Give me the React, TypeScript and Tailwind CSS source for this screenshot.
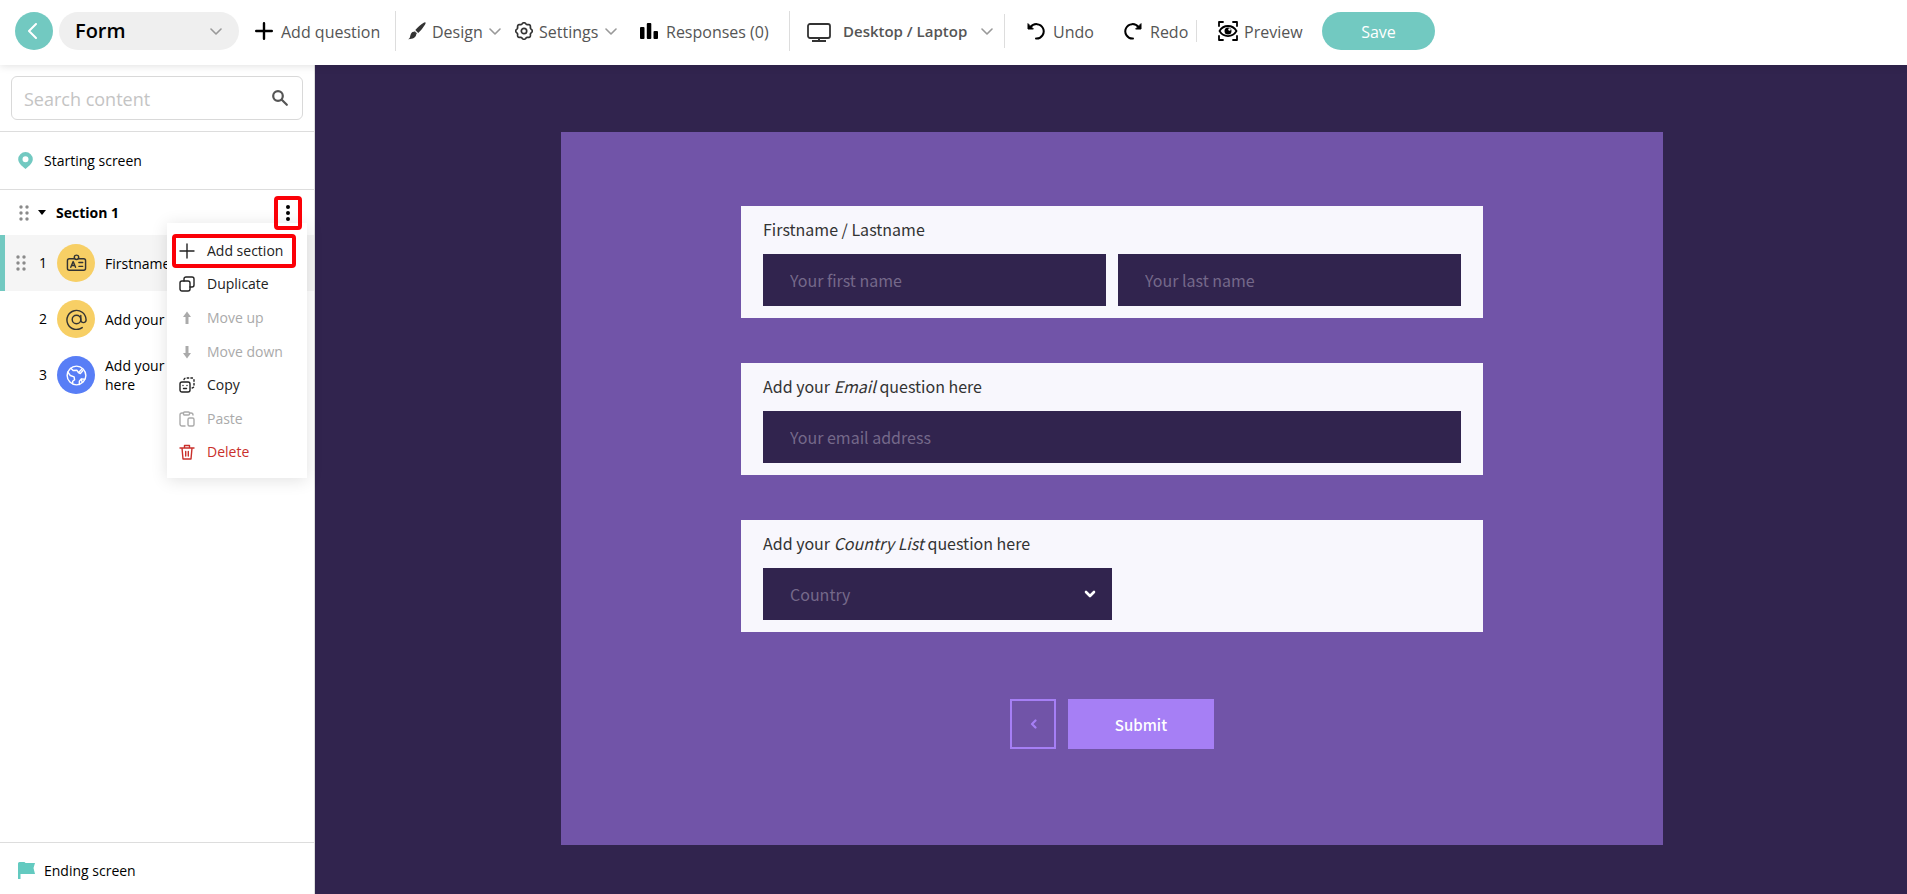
import type { ReactNode } from "react";
import clsx from "clsx";

type IconProps = { children: ReactNode; size?: string; box?: string; width?: number };

function Icon({ children, size = "h-5 w-5", box = "0 0 24 24", width = 2 }: IconProps) {
  return (
    <svg
      viewBox={box}
      fill="none"
      stroke="currentColor"
      strokeWidth={width}
      strokeLinecap="round"
      strokeLinejoin="round"
      className={clsx("shrink-0", size)}
      aria-hidden
    >
      {children}
    </svg>
  );
}

function Chevron() {
  return (
    <Icon size="h-[7px] w-3 text-[#999]" box="0 0 12 7" width={1.6}>
      <path d="M1 1l5 5 5-5" />
    </Icon>
  );
}

function Grip() {
  return (
    <svg viewBox="0 0 10 16" className="h-4 w-[10px] shrink-0 fill-[#8a8a8a]" aria-hidden>
      {[2, 8, 14].map((y) => (
        <g key={y}>
          <circle cx="2" cy={y} r="1.7" />
          <circle cx="8" cy={y} r="1.7" />
        </g>
      ))}
    </svg>
  );
}

const GEAR_PATH = Array.from({ length: 96 }, (_, i) => {
  const a = (i / 96) * Math.PI * 2;
  const r = 7.7 + 0.65 * Math.cos(a * 8);
  return `${i ? "L" : "M"}${(9 + r * Math.sin(a)).toFixed(2)} ${(9 - r * Math.cos(a)).toFixed(2)}`;
}).join("");

function Toolbar() {
  return (
    <header className="relative z-10 flex h-[65px] items-start bg-white px-[15px] pt-[11px] text-base text-[#555] shadow-[0_1px_8px_rgba(0,0,0,0.12)]">
      <div className="flex h-10 items-center whitespace-nowrap">
        <button
          type="button"
          aria-label="Back"
          className="flex h-[38px] w-[38px] items-center justify-center rounded-full bg-[#72c9c1] pr-1 text-white"
        >
          <Icon size="h-4 w-[9px]" box="0 0 9 16">
            <path d="M8 1L1 8l7 7" />
          </Icon>
        </button>
        <button
          type="button"
          className="ml-[6px] flex h-[38px] w-[180px] items-center justify-between rounded-full bg-[#efefef] pl-4 pr-[17px] text-xl font-semibold text-black"
        >
          Form
          <Chevron />
        </button>
        <button type="button" className="ml-4 flex w-[140px] items-center gap-2">
          <Icon size="h-[18px] w-[18px] text-black" box="0 0 18 18" width={2.4}>
            <path d="M9 1.2v15.6M1.2 9h15.6" />
          </Icon>
          <span className="pt-0.5">Add question</span>
        </button>
        <button
          type="button"
          className="flex h-10 w-[120px] items-center border-l border-[#ddd] pl-3"
        >
          <svg viewBox="0 0 18 18" className="h-[18px] w-[18px] fill-[#333]" aria-hidden>
            <path d="M17.4.5c.5.4.2 1.100-.3 1.900-1.900 3.100-4.600 6.400-6.900 8.600L7.300 8.100C9.700 5.400 12.700 2.600 15.700.8c.8-.5 1.300-.7 1.700-.3z" />
            <path d="M6.500 8.900l2.700 2.700-.4.400-2.700-2.700zM5.500 9.800c1.600.1 2.800 1.300 2.800 2.800-.5 2.800-3.700 4.800-8.100 4.700 1.900-.9 1.800-2.500 2.300-4.200.5-1.800 1.500-3.100 3-3.300z" />
          </svg>
          <span className="ml-[6px] w-[57px] pt-0.5 text-left">Design</span>
          <Chevron />
        </button>
        <button type="button" className="flex w-[125px] items-center">
          <Icon size="h-[18px] w-[18px] text-[#333]" box="0 0 18 18" width={1.7}>
            <path d={GEAR_PATH} />
            <circle cx="9" cy="9" r="2.7" />
          </Icon>
          <span className="ml-[6px] w-[66px] pt-0.5 text-left">Settings</span>
          <Chevron />
        </button>
        <button type="button" className="flex w-[149px] items-center gap-2">
          <svg viewBox="0 0 18 18" className="h-[18px] w-[18px] fill-black" aria-hidden>
            <rect y="5" width="4.500" height="12" rx="1" />
            <rect x="6.800" y="1" width="4.500" height="16" rx="1" />
            <rect x="13.500" y="9" width="4.500" height="8" rx="1" />
          </svg>
          <span className="pt-0.5">Responses (0)</span>
        </button>
        <button
          type="button"
          className="flex h-10 w-[215px] items-center border-l border-[#ddd] pl-[17px] text-[15px] font-semibold"
        >
          <svg viewBox="0 0 24 20" className="mt-1 h-5 w-6" aria-hidden>
            <rect x="1" y="1" width="22" height="14" rx="2" fill="none" stroke="#333" strokeWidth="1.800" />
            <path d="M11 15h2v2.500h-2zM5 17h14v2H5z" fill="#333" />
          </svg>
          <span className="ml-3 w-[138px] text-left">Desktop / Laptop</span>
          <Chevron />
        </button>
        <button
          type="button"
          className="flex h-[34px] w-[120px] items-center gap-2 border-l border-[#ddd] pl-[22px]"
        >
          <Icon size="h-[18px] w-[18px] text-black" box="0 0 18 18">
            <path d="M3.500 5.300A7.200 7.200 0 1 1 9 16.500" />
            <path d="M1 2v5h5z" fill="currentColor" strokeWidth="1" />
          </Icon>
          <span className="pt-0.5">Undo</span>
        </button>
        <button
          type="button"
          className="flex h-[22px] w-[73px] items-center gap-2 border-r border-[#ddd]"
        >
          <Icon size="h-[18px] w-[18px] text-black" box="0 0 18 18">
            <path d="M14.500 5.300A7.200 7.200 0 1 0 9 16.500" />
            <path d="M17 2v5h-5z" fill="currentColor" strokeWidth="1" />
          </Icon>
          <span className="pt-0.5">Redo</span>
        </button>
        <button type="button" className="ml-[21px] flex w-[104px] items-center gap-[6px]">
          <Icon size="h-5 w-5 text-black" box="0 0 20 20" width={1.8}>
            <path d="M1 5V1h4M15 1h4v4M19 15v4h-4M5 19H1v-4" />
            <path d="M1.500 10C5.500 3.300 14.500 3.300 18.500 10 14.500 16.700 5.500 16.700 1.500 10z" />
            <circle cx="10" cy="10" r="2.600" fill="currentColor" />
            <circle cx="11.500" cy="8.500" r="1.200" fill="white" stroke="none" />
          </Icon>
          <span className="pt-0.5">Preview</span>
        </button>
        <button
          type="button"
          className="h-[38px] w-[113px] rounded-full bg-[#72c9c1] pt-0.5 text-white"
        >
          Save
        </button>
      </div>
    </header>
  );
}

const MENU_ITEMS: { label: string; tone: string; icon: ReactNode }[] = [
  {
    label: "Add section",
    tone: "text-[#222]",
    icon: <path d="M8 1v14M1 8h14" />,
  },
  {
    label: "Duplicate",
    tone: "text-[#222]",
    icon: (
      <>
        <rect x="1" y="5" width="10" height="10" rx="2" />
        <path d="M5 5V3a2 2 0 0 1 2-2h6a2 2 0 0 1 2 2v6a2 2 0 0 1-2 2h-2" />
      </>
    ),
  },
  {
    label: "Move up",
    tone: "text-[#aaa]",
    icon: (
      <>
        <path d="M8 14V6" strokeWidth="3" strokeLinecap="butt" />
        <path d="M8 1.500l4 5.500H4z" fill="currentColor" stroke="none" />
      </>
    ),
  },
  {
    label: "Move down",
    tone: "text-[#aaa]",
    icon: (
      <>
        <path d="M8 2v8" strokeWidth="3" strokeLinecap="butt" />
        <path d="M8 14.500L12 9H4z" fill="currentColor" stroke="none" />
      </>
    ),
  },
  {
    label: "Copy",
    tone: "text-[#222]",
    icon: (
      <>
        <rect x="1" y="5" width="10" height="10" rx="2" />
        <path d="M5 2.500A2 2 0 0 1 7 1h6a2 2 0 0 1 2 2v6a2 2 0 0 1-2 2" strokeDasharray="1.500 2.200" />
        <path d="M4 8.500v.1M4.500 11.500h3M8 8.500v.1" />
      </>
    ),
  },
  {
    label: "Paste",
    tone: "text-[#aaa]",
    icon: (
      <>
        <path d="M6 15H3a2 2 0 0 1-2-2V4a2 2 0 0 1 2-2h1M11 2h1a2 2 0 0 1 2 2" />
        <rect x="4.500" y="1" width="6" height="3" rx="1" />
        <rect x="9" y="7" width="6" height="8" rx="1.500" />
      </>
    ),
  },
  {
    label: "Delete",
    tone: "text-[#c9302c]",
    icon: (
      <>
        <path d="M1 4h14M5.500 4V1.500h5V4M3 4l1 11h8l1-11" />
        <path d="M6.700 7.500v4.500M9.300 7.500v4.500" />
      </>
    ),
  },
];

function SectionMenu() {
  return (
    <div
      role="menu"
      className="absolute right-[7px] top-[33px] z-10 flex h-[255px] w-[140px] flex-col bg-white pb-[9px] pt-[11px] shadow-[0_2px_16px_rgba(0,0,0,0.12)]"
    >
      {MENU_ITEMS.map((item, i) => (
        <button
          key={item.label}
          type="button"
          role="menuitem"
          className={clsx("relative flex flex-1 items-center gap-3 pl-3 text-sm", item.tone)}
        >
          <Icon size="h-4 w-4" box="0 0 16 16" width={1.4}>
            {item.icon}
          </Icon>
          {item.label}
          {i === 0 && (
            <span className="absolute inset-y-0 left-[5px] right-[11px] rounded-sm border-[4px] border-[#fb0007]" />
          )}
        </button>
      ))}
    </div>
  );
}

const QUESTIONS = [
  {
    text: "Firstname",
    badge: "bg-[#f7cf65] text-[#333]",
    icon: (
      <>
        <path d="M8.500 6H3.500A2 2 0 0 0 1.500 8v8a2 2 0 0 0 2 2h15a2 2 0 0 0 2-2V8a2 2 0 0 0-2-2h-5" />
        <circle cx="11" cy="4.500" r="2.300" />
        <path d="M5 15l2.500-6 2.500 6M6 13h3M13.500 10h4M13.500 14h4" />
      </>
    ),
  },
  {
    text: "Add your",
    badge: "bg-[#f7cf65] text-[#333]",
    icon: (
      <>
        <circle cx="11" cy="11" r="4.500" />
        <path d="M15.500 6.800V12a2.800 2.800 0 0 0 5.500 0v-1a10 10 0 1 0-4 8.500" />
      </>
    ),
  },
  {
    text: "Add your here",
    badge: "bg-[#587ef6] text-white",
    icon: (
      <>
        <circle cx="11" cy="11" r="9.800" />
        <path d="M5 3.500l2.500 2.300 4-.3 1.500 2.500 3.500-3.500M13 8l2 1 2.500-3M2 7.500l2.500 3.500 4 1.500.5 3-2 1.500v2.500M14 20.500v-3.500l2-2.500 3.500.5M16 15l1 3" />
      </>
    ),
  },
];

function Sidebar() {
  return (
    <aside className="flex w-[315px] shrink-0 flex-col border-r border-[#ddd] bg-white text-sm text-black">
      <div className="border-b border-[#ddd] px-[11px] pb-[11px] pt-[11px]">
        <div className="flex h-11 items-center rounded-md border border-[#d9d9d9] pl-3 pr-[14px]">
          <input
            type="search"
            aria-label="Search content"
            placeholder="Search content"
            className="min-w-0 flex-1 pt-0.5 text-lg outline-none placeholder:text-[#c4c4c4]"
          />
          <Icon size="h-4 w-4 text-[#555]" box="0 0 16 16" width={2.2}>
            <circle cx="6" cy="6" r="4.800" />
            <path d="M10 10l4.800 4.800" />
          </Icon>
        </div>
      </div>

      <a href="#start" className="flex h-[58px] items-center gap-[11px] border-b border-[#ddd] pl-[18px]">
        <svg viewBox="0 0 15 17" className="h-[17px] w-[15px]" aria-hidden>
          <path
            d="M7.500 0A7.300 7.300 0 0 0 .2 7.300c0 3.500 3.300 6.500 7.300 9.700 4-3.200 7.300-6.200 7.300-9.700A7.300 7.300 0 0 0 7.500 0zm0 4.200a3 3 0 1 1 0 6 3 3 0 0 1 0-6z"
            fill="#72c9c1"
          />
        </svg>
        Starting screen
      </a>

      <div className="relative flex h-[45px] items-center pl-[19px]">
        <Grip />
        <svg viewBox="0 0 8 5" className="ml-[9px] h-[5px] w-2" aria-hidden>
          <path d="M0 0h8L4 5z" />
        </svg>
        <h2 className="ml-[10px] font-bold">Section 1</h2>
        <button
          type="button"
          aria-label="Section options"
          className="absolute right-3 top-[6px] z-20 flex h-[34px] w-7 items-center justify-center rounded-sm border-[4px] border-[#fb0007]"
        >
          <svg viewBox="0 0 4 16" className="h-4 w-1" aria-hidden>
            <circle cx="2" cy="2" r="2" />
            <circle cx="2" cy="8" r="2" />
            <circle cx="2" cy="14" r="2" />
          </svg>
        </button>
        <SectionMenu />
      </div>

      <ol>
        {QUESTIONS.map((q, i) => (
          <li
            key={i}
            className={clsx(
              "flex h-14 items-center border-l-[5px] pl-[11px]",
              i === 0 ? "border-[#72c9c1] bg-[#f5f5f5]" : "border-transparent",
            )}
          >
            <span className="flex w-[10px]">{i === 0 && <Grip />}</span>
            <span className="ml-[13px] w-[18px]">{i + 1}</span>
            <span
              className={clsx(
                "flex h-[38px] w-[38px] shrink-0 items-center justify-center rounded-full",
                q.badge,
              )}
            >
              <Icon size="h-[21px] w-[21px]" box="0 0 22 22" width={1.5}>
                {q.icon}
              </Icon>
            </span>
            <span className="ml-[10px] w-16 leading-[19px]">{q.text}</span>
          </li>
        ))}
      </ol>

      <a
        href="#end"
        className="mt-auto flex h-[52px] items-center gap-[9px] border-t border-[#ddd] pl-[18px] pt-1"
      >
        <svg viewBox="0 0 17 17" className="h-[17px] w-[17px]" aria-hidden>
          <path d="M0 1.500Q0 0 1.500 0H6q1 0 1.500 1H17l-1.500 5L17 12H9q-1 0-1.500 0H2.500v5H0z" fill="#63cac0" />
        </svg>
        Ending screen
      </a>
    </aside>
  );
}

const FIELD =
  "h-[52px] w-full min-w-0 bg-[#31244e] px-[27px] text-base outline-none placeholder:text-[#75698a]";

function Card({ children }: { children: ReactNode }) {
  return <section className="bg-[#f8f7fd] px-[22px] pb-3 pt-[11px]">{children}</section>;
}

function FormPreview() {
  return (
    <main className="flex-1 bg-[#31244e] pb-[49px] pl-[26px] pr-6 pt-[67px] font-['Noto_Sans_CJK_SC',sans-serif]">
      <form className="mx-auto max-w-[1102px] bg-[#7154a8] pb-24 pt-[74px]">
        <div className="mx-auto flex max-w-[742px] flex-col gap-[45px] text-base text-[#333]">
          <Card>
            <label htmlFor="first-name" className="block pb-[13px]">
              Firstname / Lastname
            </label>
            <div className="grid grid-cols-2 gap-3">
              <input id="first-name" placeholder="Your first name" className={clsx(FIELD, "text-white")} />
              <input
                aria-label="Last name"
                placeholder="Your last name"
                className={clsx(FIELD, "text-white")}
              />
            </div>
          </Card>
          <Card>
            <label htmlFor="email" className="block pb-[13px]">
              Add your <i>Email</i> question here
            </label>
            <input
              id="email"
              type="email"
              placeholder="Your email address"
              className={clsx(FIELD, "text-white")}
            />
          </Card>
          <Card>
            <label htmlFor="country" className="block pb-[13px]">
              Add your <i>Country List</i> question here
            </label>
            <div className="relative w-1/2">
              <select id="country" className={clsx(FIELD, "appearance-none text-[#75698a]")}>
                <option>Country</option>
              </select>
              <span className="pointer-events-none absolute inset-y-0 right-4 flex items-center text-white">
                <Icon size="h-2 w-3" box="0 0 12 8" width={2.6}>
                  <path d="M2 2l4 4 4-4" />
                </Icon>
              </span>
            </div>
          </Card>
        </div>
        <div className="mt-[67px] flex justify-center gap-3">
          <button
            type="button"
            aria-label="Previous"
            className="flex h-[50px] w-[46px] items-center justify-center border-2 border-[#a67ff5] text-[#a67ff5]"
          >
            <Icon size="h-[10px] w-[7px]" box="0 0 7 10" width={2.2}>
              <path d="M5.500 1.500L2 5l3.500 3.500" />
            </Icon>
          </button>
          <button
            type="submit"
            className="h-[50px] w-[146px] bg-[#a67ff5] pt-0.5 text-[15px] font-medium text-white"
          >
            Submit
          </button>
        </div>
      </form>
    </main>
  );
}

export default function App() {
  return (
    <div className="flex min-h-screen flex-col font-['Open_Sans','Noto_Sans',sans-serif]">
      <Toolbar />
      <div className="flex flex-1">
        <Sidebar />
        <FormPreview />
      </div>
    </div>
  );
}
